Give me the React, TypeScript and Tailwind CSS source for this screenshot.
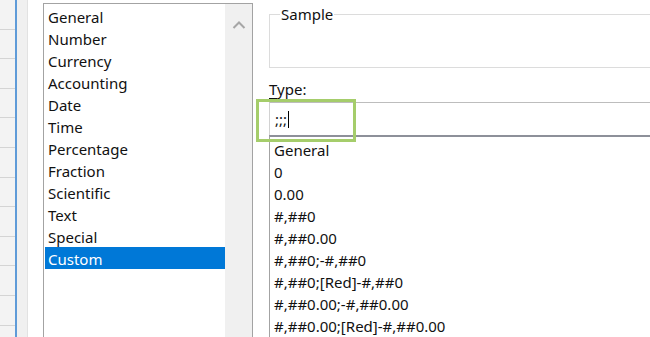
import React from "react";

const categories = [
  "General",
  "Number",
  "Currency",
  "Accounting",
  "Date",
  "Time",
  "Percentage",
  "Fraction",
  "Scientific",
  "Text",
  "Special",
  "Custom",
];

const formats = [
  "General",
  "0",
  "0.00",
  "#,##0",
  "#,##0.00",
  "#,##0;-#,##0",
  "#,##0;[Red]-#,##0",
  "#,##0.00;-#,##0.00",
  "#,##0.00;[Red]-#,##0.00",
];

export default function App() {
  return (
    <div
      className="w-[650px] h-[337px] overflow-hidden flex bg-white text-[15px] text-[#111]"
      style={{ fontFamily: '"Noto Sans", "Open Sans", sans-serif' }}
    >
      {/* spreadsheet strip */}
      <div className="w-[15px] shrink-0 bg-[#f3f3f3] flex flex-col">
        {Array.from({ length: 11 }).map((_, i) => (
          <div key={i} className="h-[29.6px] shrink-0 border-b border-[#d4d4d4]" />
        ))}
      </div>
      <div className="w-[2px] shrink-0 bg-[#5f9bd8]" />
      <div className="w-[11px] shrink-0 bg-[#f0f0f0] border-r border-[#e2e2e2]" />

      {/* tab page */}
      <div className="flex-1 flex items-start pl-[15px] min-w-0">
        {/* category listbox */}
        <div className="mt-[3px] w-[210px] h-[400px] shrink-0 border border-b-0 border-[#a3a3a3] flex">
          <div className="w-[181px] pl-[1px] pt-[1px] bg-white flex flex-col">
            {categories.map((c) => (
              <div
                key={c}
                className={
                  c === "Custom"
                    ? "h-[22px] pl-[3px] pt-[1px] leading-[22px] bg-[#0078d7] text-white"
                    : "h-[22px] pl-[3px] pt-[1px] leading-[22px]"
                }
              >
                {c}
              </div>
            ))}
          </div>
          <div className="w-[27px] bg-[#f0f0f0] flex justify-center pt-[14px]">
            <svg width="14" height="10" viewBox="0 0 14 10" className="mt-[2px]">
              <path d="M1.5 8 L7 2.5 L12.5 8" fill="none" stroke="#a6a6a6" strokeWidth="2" />
            </svg>
          </div>
        </div>

        {/* right side */}
        <div className="ml-[16px] flex-1 flex flex-col min-w-0">
          <div className="relative mt-[14px] h-[54px] border border-r-0 border-[#dcdcdc]">
            <span className="absolute left-[10px] top-[-12px] bg-white px-[1px] leading-[22px]">
              Sample
            </span>
          </div>

          <div className="mt-[9px] h-[22px] pt-[1px] leading-[22px]">
            <span className="underline underline-offset-[3px] decoration-1">T</span>ype:
          </div>

          <div className="relative mt-[3px]">
            <div className="h-[33px] border-t border-l border-t-[#bdbdbd] border-l-[#d2d2d2] pl-[5px] flex items-center">
              <span className="leading-none">;;;</span>
              <span className="ml-[1px] w-[1px] h-[17px] bg-black" />
            </div>
            <div className="absolute left-[-13px] top-[-3px] w-[100px] h-[43px] border-[3px] border-[#a5cd6b]" />
          </div>

          <div className="border-t-2 border-t-[#8d9099] border-l border-l-[#a3a3a3] pt-[1px] pl-[4px] h-[220px]">
            {formats.map((f) => (
              <div key={f} className="h-[22px] pt-[1px] leading-[22px] whitespace-nowrap">
                {f}
              </div>
            ))}
          </div>
        </div>
      </div>
    </div>
  );
}
